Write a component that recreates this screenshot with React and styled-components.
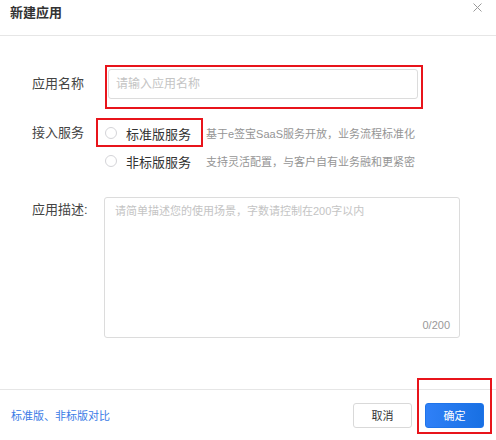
import React from "react";
import styled, { createGlobalStyle } from "styled-components";

const GlobalStyle = createGlobalStyle`
  html, body {
    margin: 0;
    padding: 0;
    background: #ffffff;
  }
  body {
    font-family: "Liberation Sans", "Noto Sans CJK SC", sans-serif;
    color: #333333;
  }
`;

const Dialog = styled.div`
  width: 496px;
  height: 440px;
  display: flex;
  flex-direction: column;
  background: #ffffff;
  overflow: hidden;
`;

const Header = styled.div`
  height: 35px;
  border-bottom: 1px solid #e6e6e6;
  display: flex;
  justify-content: space-between;
  align-items: flex-start;
  padding: 0 14px 0 10px;
  box-sizing: content-box;
`;

const Title = styled.div`
  margin-top: 5px;
  font-size: 13px;
  line-height: 15px;
  font-weight: 700;
  color: #333333;
`;

const Close = styled.button`
  margin-top: 3px;
  width: 9px;
  height: 9px;
  padding: 0;
  border: none;
  background: none;
  display: flex;
  cursor: pointer;
`;

const Body = styled.div`
  flex: 1;
  padding: 33px 0 0 32px;
  display: flex;
  flex-direction: column;
`;

const Row = styled.div`
  display: flex;
  align-items: ${(p) => p.$align || "center"};
  margin-top: ${(p) => p.$gap || 0}px;
`;

const Label = styled.div`
  width: 72px;
  flex: none;
  font-size: 13px;
  line-height: ${(p) => p.$lh || 20}px;
  color: #444444;
`;

const Marked = styled.div`
  position: relative;
  display: flex;
  &::after {
    content: "";
    position: absolute;
    top: ${(p) => p.$t}px;
    left: ${(p) => p.$l}px;
    right: ${(p) => p.$r}px;
    bottom: ${(p) => p.$b}px;
    border: 2px solid #e8141b;
    pointer-events: none;
  }
`;

const Input = styled.input`
  margin-left: 4px;
  width: 310px;
  height: 30px;
  box-sizing: border-box;
  border: 1px solid #dcdcdc;
  border-radius: 3px;
  padding: 0 7px;
  font-family: inherit;
  font-size: 12px;
  outline: none;
  &::placeholder {
    color: #c4c4c4;
  }
`;

const Options = styled.div`
  display: flex;
  flex-direction: column;
  gap: 8px;
`;

const Option = styled.label`
  display: flex;
  align-items: center;
  height: 20px;
  cursor: pointer;
`;

const OptionHead = styled.div`
  display: flex;
  align-items: center;
  width: 101px;
  padding-left: 1px;
`;

const Radio = styled.span`
  width: 12px;
  height: 12px;
  box-sizing: border-box;
  border: 1px solid #d4d4d8;
  border-radius: 50%;
  background: #ffffff;
  flex: none;
`;

const OptionName = styled.span`
  margin-left: 9px;
  font-size: 13px;
  color: #333333;
`;

const OptionDesc = styled.span`
  font-size: 11px;
  color: #959595;
`;

const TextBox = styled.div`
  width: 356px;
  height: 141px;
  box-sizing: border-box;
  border: 1px solid #dcdcdc;
  border-radius: 3px;
  display: flex;
  flex-direction: column;
  padding: 6px 9px 6px 10px;
`;

const TextArea = styled.textarea`
  flex: 1;
  border: none;
  resize: none;
  padding: 0;
  outline: none;
  font-family: inherit;
  font-size: 11px;
  line-height: 14px;
  &::placeholder {
    color: #c4c4c4;
  }
`;

const Counter = styled.div`
  align-self: flex-end;
  font-size: 11px;
  color: #999999;
`;

const Footer = styled.div`
  height: 50px;
  border-top: 1px solid #e6e6e6;
  display: flex;
  align-items: center;
  justify-content: space-between;
  padding: 0 12px 0 11px;
`;

const Compare = styled.a`
  font-size: 11px;
  color: #3a7be6;
  text-decoration: none;
  cursor: pointer;
`;

const Actions = styled.div`
  display: flex;
  gap: 13px;
`;

const Button = styled.button`
  width: 59px;
  height: 25px;
  box-sizing: border-box;
  border-radius: 3px;
  font-family: inherit;
  font-size: 11px;
  cursor: pointer;
  border: 1px solid ${(p) => (p.$primary ? "#1f74ea" : "#d9d9d9")};
  color: ${(p) => (p.$primary ? "#ffffff" : "#333333")};
  background: ${(p) =>
    p.$primary ? "linear-gradient(90deg, #2f80f7, #1870e3)" : "#ffffff"};
`;

const options = [
  { name: "标准版服务", desc: "基于e签宝SaaS服务开放，业务流程标准化", marked: true },
  { name: "非标版服务", desc: "支持灵活配置，与客户自有业务融和更紧密" },
];

export default function App() {
  return (
    <Dialog>
      <GlobalStyle />
      <Header>
        <Title>新建应用</Title>
        <Close aria-label="关闭">
          <svg width="9" height="9" viewBox="0 0 9 9">
            <path d="M0.5 0.5 L8.5 8.5 M8.5 0.5 L0.5 8.5" stroke="#9a9a9a" strokeWidth="1" />
          </svg>
        </Close>
      </Header>
      <Body>
        <Row>
          <Label>应用名称</Label>
          <Marked $t={-4} $l={1} $r={-5} $b={-10}>
            <Input placeholder="请输入应用名称" />
          </Marked>
        </Row>
        <Row $align="flex-start" $gap={24}>
          <Label>接入服务</Label>
          <Options>
            {options.map((o) => (
              <Option key={o.name}>
                {o.marked ? (
                  <Marked $t={-6} $l={-8} $r={3} $b={-4}>
                    <OptionHead>
                      <Radio />
                      <OptionName>{o.name}</OptionName>
                    </OptionHead>
                  </Marked>
                ) : (
                  <OptionHead>
                    <Radio />
                    <OptionName>{o.name}</OptionName>
                  </OptionHead>
                )}
                <OptionDesc>{o.desc}</OptionDesc>
              </Option>
            ))}
          </Options>
        </Row>
        <Row $align="flex-start" $gap={26}>
          <Label $lh={26}>应用描述:</Label>
          <TextBox>
            <TextArea placeholder="请简单描述您的使用场景，字数请控制在200字以内" />
            <Counter>0/200</Counter>
          </TextBox>
        </Row>
      </Body>
      <Footer>
        <Compare>标准版、非标版对比</Compare>
        <Actions>
          <Button>取消</Button>
          <Marked $t={-25} $l={-8} $r={-8} $b={-6}>
            <Button $primary>确定</Button>
          </Marked>
        </Actions>
      </Footer>
    </Dialog>
  );
}
